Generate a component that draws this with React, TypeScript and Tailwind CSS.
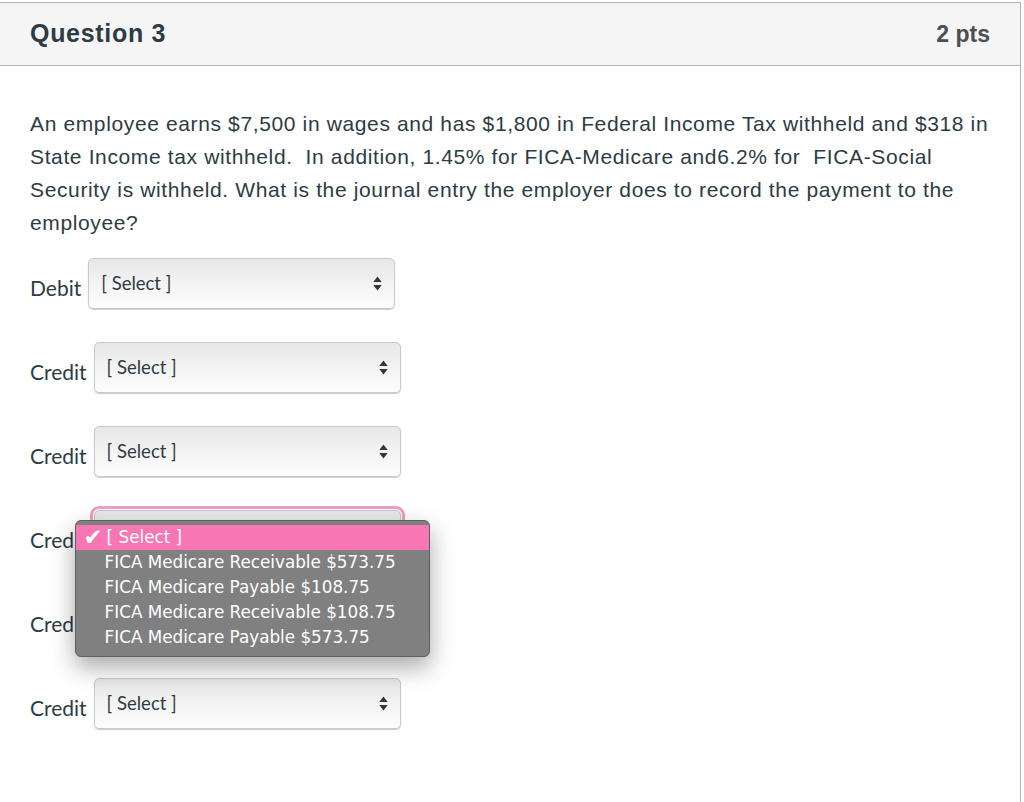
import React from 'react'

const ink = 'text-[#2d3b45]'

function Arrows() {
  return (
    <svg width="9" height="15" viewBox="0 0 9 15" className="shrink-0">
      <path d="M4.5 0.5 L8.7 6 L0.3 6 Z" fill="#30363b" />
      <path d="M4.5 14.5 L8.7 9 L0.3 9 Z" fill="#30363b" />
    </svg>
  )
}

function SelectBox({ focused = false, children }: { focused?: boolean; children?: React.ReactNode }) {
  return (
    <div className="relative ml-[7px]">
      <div
        className={
          'flex h-[51px] w-[307px] items-center justify-between rounded-[5px] border border-[#c9c9c9] bg-gradient-to-b from-[#e7e7e7] via-[#f3f3f3] to-[#fdfdfd] pl-[12px] pr-[12px] shadow-[0_1px_1px_rgba(0,0,0,0.2)] ' +
          (focused ? 'outline outline-[3px] outline-offset-[1px] outline-[#ef9fc6]' : '')
        }
      >
        <span className="font-['Lato',sans-serif] text-[18.5px] text-[#2d3b45]">[ Select ]</span>
        <Arrows />
      </div>
      {children}
    </div>
  )
}

function Row({ label, focused, children }: { label: string; focused?: boolean; children?: React.ReactNode }) {
  return (
    <div className="flex items-center">
      <span className={`font-['Lato',sans-serif] text-[21px] ${ink} mt-[9px]`}>{label}</span>
      <SelectBox focused={focused}>{children}</SelectBox>
    </div>
  )
}

const OPTIONS = [
  'FICA Medicare Receivable $573.75',
  'FICA Medicare Payable $108.75',
  'FICA Medicare Receivable $108.75',
  'FICA Medicare Payable $573.75',
]

function Menu() {
  return (
    <div className="absolute left-[-19px] top-[10px] z-10 w-[355px] rounded-[6px] border border-[#5f5f5f] bg-[#808080] pt-[4px] pb-[6px] shadow-[0_10px_24px_rgba(0,0,0,0.35)] font-['DejaVu_Sans',sans-serif] text-[16.8px] text-white">
      <div className="flex h-[25px] items-center bg-[#f776b3] pl-[8px]">
        <span className="w-[23px] text-[23px] leading-none">✔</span>
        <span>[ Select ]</span>
      </div>
      {OPTIONS.map((o) => (
        <div key={o} className="flex h-[25px] items-center pl-[29px]">
          {o}
        </div>
      ))}
    </div>
  )
}

export default function App() {
  return (
    <div className="h-[802px] w-[1024px] overflow-hidden bg-white pt-[2px]">
      <div className="h-[800px] w-[1021px] border-t border-r border-[#b3b3b3]">
        <div className="flex h-[63px] items-center justify-between border-b border-[#b3b3b3] bg-[#f5f5f5] pl-[30px] pr-[30px]">
          <span className={`font-['Liberation_Sans',Arial,sans-serif] text-[25px] font-bold ${ink} tracking-[0.7px]`}>
            Question 3
          </span>
          <span className={`font-['Liberation_Sans',Arial,sans-serif] text-[23px] font-bold text-[#4a4f54]`}>2 pts</span>
        </div>
        <div className="pl-[30px] pt-[41px]">
          <p className={`font-['Liberation_Sans',Arial,sans-serif] text-[21px] leading-[33px] tracking-[0.63px] ${ink}`}>
            An employee earns $7,500 in wages and has $1,800 in Federal Income Tax withheld and $318 in
            <br />
            State Income tax withheld.&nbsp; In addition, 1.45% for FICA-Medicare and6.2% for&nbsp; FICA-Social
            <br />
            Security is withheld. What is the journal entry the employer does to record the payment to the
            <br />
            employee?
          </p>
          <div className="mt-[19px] flex flex-col gap-[33px]">
            <Row label="Debit" />
            <Row label="Credit" />
            <Row label="Credit" />
            <Row label="Credit" focused>
              <Menu />
            </Row>
            <Row label="Credit" />
            <Row label="Credit" />
          </div>
        </div>
      </div>
    </div>
  )
}
